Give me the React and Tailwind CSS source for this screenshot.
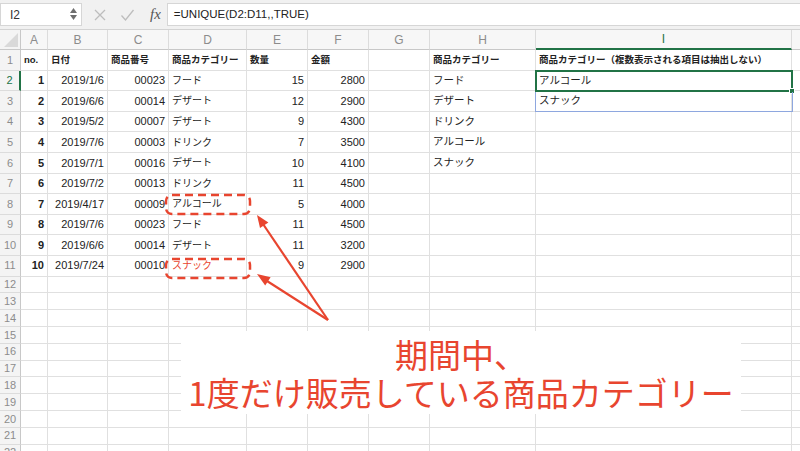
import clsx from 'clsx';

const W = [
  'w-[21px]', 'w-[27px]', 'w-[60px]', 'w-[61px]', 'w-[78px]', 'w-[61px]',
  'w-[61px]', 'w-[61px]', 'w-[106px]', 'w-[256px]', 'w-[40px]',
];
const LETTERS = ['A', 'B', 'C', 'D', 'E', 'F', 'G', 'H', 'I', ''];

const ROWS = [
  ['1', '2019/1/6', '00023', 'フード', '15', '2800', '', 'フード', 'アルコール'],
  ['2', '2019/6/6', '00014', 'デザート', '12', '2900', '', 'デザート', 'スナック'],
  ['3', '2019/5/2', '00007', 'デザート', '9', '4300', '', 'ドリンク', ''],
  ['4', '2019/7/6', '00003', 'ドリンク', '7', '3500', '', 'アルコール', ''],
  ['5', '2019/7/1', '00016', 'デザート', '10', '4100', '', 'スナック', ''],
  ['6', '2019/7/2', '00013', 'ドリンク', '11', '4500', '', '', ''],
  ['7', '2019/4/17', '00009', 'アルコール', '5', '4000', '', '', ''],
  ['8', '2019/7/6', '00023', 'フード', '11', '4500', '', '', ''],
  ['9', '2019/6/6', '00014', 'デザート', '11', '3200', '', '', ''],
  ['10', '2019/7/24', '00010', 'スナック', '9', '2900', '', '', ''],
];

const HEAD = ['no.', '日付', '商品番号', '商品カテゴリー', '数量', '金額', '', '商品カテゴリー', '商品カテゴリー（複数表示される項目は抽出しない）'];

const RIGHT = [true, true, true, false, true, true, false, false, false];

function RowHead({ n, tall, active }) {
  return (
    <div
      className={clsx(
        W[0],
        'shrink-0 flex items-center justify-center bg-[#f4f4f4] border-b border-[#dcdcdc] text-[11px]',
        tall ? 'h-[20.6px]' : 'h-[16.8px]',
        active ? 'text-[#217346] border-r-2 border-r-[#217346]' : 'text-[#8c8c8c] border-r border-r-[#c8c8c8]'
      )}
    >
      {n}
    </div>
  );
}

function Cell({ i, children, right, bold, red, size = 'text-[11px]', tall = true }) {
  return (
    <div
      className={clsx(
        W[i + 1],
        'shrink-0 flex items-center px-[3px] whitespace-nowrap border-r border-b border-[#e0e0e0] overflow-visible',
        tall ? 'h-[20.6px]' : 'h-[16.8px]',
        right ? 'justify-end' : 'justify-start',
        bold && 'font-bold',
        red ? 'text-[#e8452f]' : 'text-[#222]',
        size
      )}
    >
      {children}
    </div>
  );
}

function FormulaBar() {
  return (
    <div className="flex h-[30px] items-start bg-[#f1f1f1] pt-[3px] border-b border-[#d3d3d3]">
      <div className="relative w-[82px] h-[23px] bg-white border border-[#d6d6d6] flex items-center pl-[9px] text-[12px] text-[#333]">
        I2
        <div className="absolute right-[4px] top-[4px] flex flex-col items-center gap-[2px]">
          <svg width="7" height="5" viewBox="0 0 7 5"><path d="M3.5 0L7 5H0z" fill="#6e6e6e" /></svg>
          <svg width="7" height="5" viewBox="0 0 7 5"><path d="M0 0h7L3.5 5z" fill="#6e6e6e" /></svg>
        </div>
      </div>
      <div className="flex items-center h-[23px] pl-[11px] gap-[13px]">
        <svg width="14" height="14" viewBox="0 0 14 14"><path d="M2 2l10 10M12 2L2 12" stroke="#bdbdbd" strokeWidth="1.3" /></svg>
        <svg width="15" height="14" viewBox="0 0 15 14"><path d="M1.5 7.5l4 4.5 8-10" stroke="#bdbdbd" strokeWidth="1.3" fill="none" /></svg>
        <span className="text-[15px] italic text-[#555] ml-[2px]" style={{ fontFamily: '"Liberation Serif", serif' }}>fx</span>
      </div>
      <div className="ml-[6px] flex-1 h-[23px] bg-white border-l border-y border-[#d6d6d6] flex items-center pl-[6px] text-[11.5px] text-[#222]">
        =UNIQUE(D2:D11,,TRUE)
      </div>
    </div>
  );
}

function Annotations() {
  return (
    <svg className="absolute inset-0 pointer-events-none" width="800" height="451" viewBox="0 0 800 451">
      <rect x="166" y="195" width="84" height="19" rx="6" fill="none" stroke="#e8452f" strokeWidth="2.5" strokeDasharray="8 5" />
      <rect x="166" y="259" width="84" height="19" rx="6" fill="none" stroke="#e8452f" strokeWidth="2.5" strokeDasharray="8 5" />
      <line x1="328" y1="320" x2="263" y2="224" stroke="#e8452f" strokeWidth="2.2" />
      <line x1="328" y1="320" x2="267" y2="281" stroke="#e8452f" strokeWidth="2.2" />
      <polygon points="257,215 268.4,222.5 260,228" fill="#e8452f" />
      <polygon points="257,274 270.6,277.3 265.2,285.6" fill="#e8452f" />
    </svg>
  );
}

export default function App() {
  const font = { fontFamily: '"Liberation Sans", "Noto Sans CJK JP", sans-serif' };
  return (
    <div className="relative w-[800px] h-[451px] overflow-hidden bg-white" style={font}>
      <FormulaBar />

      {/* column letters */}
      <div className="flex h-[20px] bg-[#f7f7f7]">
        <div className={clsx(W[0], 'shrink-0 relative border-r border-b border-[#c8c8c8] bg-[#f4f4f4]')}>
          <svg className="absolute right-[2px] bottom-[2px]" width="14" height="14" viewBox="0 0 14 14"><path d="M14 0V14H0z" fill="#d9d9d9" /></svg>
        </div>
        {LETTERS.map((l, i) => (
          <div
            key={i}
            className={clsx(
              W[i + 1],
              'shrink-0 flex items-center justify-center text-[12px] border-r border-[#dcdcdc]',
              l === 'I' ? 'text-[#217346] border-b-2 border-b-[#217346] bg-[#f7f7f7]' : 'text-[#8c8c8c] border-b border-b-[#c8c8c8]'
            )}
          >
            {l}
          </div>
        ))}
      </div>

      {/* row 1: headings */}
      <div className="flex">
        <RowHead n={1} tall />
        {HEAD.map((h, i) => (
          <Cell key={i} i={i} bold size="text-[9.5px]">{h}</Cell>
        ))}
        <Cell i={9} />
      </div>

      {ROWS.map((r, ri) => (
        <div key={ri} className="flex">
          <RowHead n={ri + 2} tall active={ri === 0} />
          {r.map((v, i) => (
            <Cell
              key={i}
              i={i}
              right={RIGHT[i]}
              bold={i === 0}
              red={i === 3 && ri === 9}
              size={i === 3 ? 'text-[10px]' : i >= 7 ? 'text-[10.5px]' : 'text-[11px]'}
            >
              {v}
            </Cell>
          ))}
          <Cell i={9} />
        </div>
      ))}

      {/* empty rows */}
      {Array.from({ length: 11 }, (_, k) => (
        <div key={k} className="flex">
          <RowHead n={k + 12} />
          {LETTERS.map((l, i) => <Cell key={i} i={i} tall={false} />)}
        </div>
      ))}

      {/* selection I2 / I3 */}
      <div className="absolute left-[535px] top-[70px] w-[258px] h-[22px] border-2 border-[#217346] pointer-events-none">
        <div className="absolute -right-[4px] -bottom-[4px] w-[6px] h-[6px] bg-[#217346] border border-white" />
      </div>
      <div className="absolute left-[535px] top-[92px] w-[258px] h-[20px] border-[1.5px] border-t-0 border-[#8ea7df] pointer-events-none" />

      {/* callout */}
      <div className="absolute left-[181px] top-[331px] w-[560px] h-[83px] bg-white flex flex-col items-center justify-center text-[33px] leading-[38px] text-[#e8452f]" style={{ fontFamily: '"Noto Sans CJK JP", sans-serif' }}>
        <div>期間中、</div>
        <div>1度だけ販売している商品カテゴリー</div>
      </div>

      <Annotations />
    </div>
  );
}
